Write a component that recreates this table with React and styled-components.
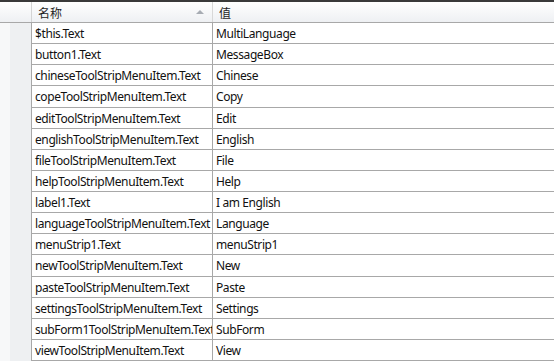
import React from "react";
import styled, { createGlobalStyle } from "styled-components";

const rows = [
  ["$this.Text", "MultiLanguage"],
  ["button1.Text", "MessageBox"],
  ["chineseToolStripMenuItem.Text", "Chinese"],
  ["copeToolStripMenuItem.Text", "Copy"],
  ["editToolStripMenuItem.Text", "Edit"],
  ["englishToolStripMenuItem.Text", "English"],
  ["fileToolStripMenuItem.Text", "File"],
  ["helpToolStripMenuItem.Text", "Help"],
  ["label1.Text", "I am English"],
  ["languageToolStripMenuItem.Text", "Language"],
  ["menuStrip1.Text", "menuStrip1"],
  ["newToolStripMenuItem.Text", "New"],
  ["pasteToolStripMenuItem.Text", "Paste"],
  ["settingsToolStripMenuItem.Text", "Settings"],
  ["subForm1ToolStripMenuItem.Text", "SubForm"],
  ["viewToolStripMenuItem.Text", "View"],
];

const App = () => {
  return (
    <>
      <GlobalStyle />
      <Grid>
        <HeaderRow>
          <Gutter $header />
          <HeadCell $first>
            <span>名称</span>
            <SortArrow />
          </HeadCell>
          <HeadCell>值</HeadCell>
        </HeaderRow>
        <Body>
          {rows.map(([name, value]) => (
            <Row key={name}>
              <Gutter />
              <Cell $first>{name}</Cell>
              <Cell>{value}</Cell>
            </Row>
          ))}
        </Body>
      </Grid>
    </>
  );
};

export default App;

const GlobalStyle = createGlobalStyle`
  html, body {
    margin: 0;
    padding: 0;
    background: #ffffff;
    overflow: hidden;
  }
`;

const Grid = styled.div`
  width: 554px;
  height: 361px;
  border-top: 2px solid #3a3a3a;
  box-sizing: border-box;
  display: flex;
  flex-direction: column;
  font-family: "Noto Sans", "Noto Sans CJK SC", sans-serif;
  font-size: 12px;
  letter-spacing: -0.4px;
  color: #111111;
  overflow: hidden;
`;

const HeaderRow = styled.div`
  display: grid;
  grid-template-columns: 32px 181px 1fr;
  height: 21px;
  flex: none;
  box-sizing: border-box;
  background: linear-gradient(#ffffff, #eef0f3);
  border-bottom: 1px solid #a8a8a8;
`;

const Body = styled.div`
  flex: 1;
  display: flex;
  flex-direction: column;
`;

const Row = styled.div`
  display: grid;
  grid-template-columns: 32px 181px 1fr;
  flex: 1;
  border-bottom: 1px solid #a8a8a8;
  box-sizing: border-box;
`;

const Gutter = styled.div`
  background: ${(p) =>
    p.$header ? "transparent" : "linear-gradient(90deg, #f7f8f9 0 10px, #eef0f2 10px)"};
  border-right: 1px solid ${(p) => (p.$header ? "#d4d4d4" : "#a8a8a8")};
  margin-bottom: ${(p) => (p.$header ? "0" : "-1px")};
`;

const HeadCell = styled.div`
  display: flex;
  align-items: center;
  justify-content: space-between;
  padding: 0 8px 0 6px;
  border-right: ${(p) => (p.$first ? "1px solid #d8d8d8" : "none")};
  font-family: "Noto Sans CJK SC", sans-serif;
  font-size: 12px;
  letter-spacing: 0;
  color: #1e1e1e;
`;

const SortArrow = styled.span`
  width: 0;
  height: 0;
  border-left: 4px solid transparent;
  border-right: 4px solid transparent;
  border-bottom: 4px solid #a7acb3;
`;

const Cell = styled.div`
  display: flex;
  align-items: center;
  padding: 0 3px;
  white-space: nowrap;
  overflow: hidden;
  border-right: ${(p) => (p.$first ? "1px solid #a8a8a8" : "none")};
  margin-bottom: -1px;
  box-sizing: border-box;
`;
